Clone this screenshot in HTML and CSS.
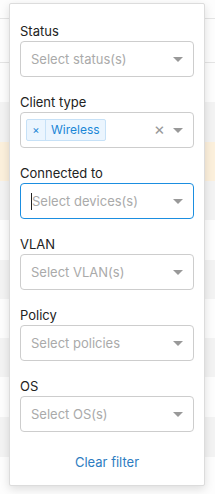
FILE: index.html
```html
<!DOCTYPE html>
<html>
<head>
<meta charset="utf-8">
<link rel="stylesheet" href="styles.css">
</head>
<body>
<div class="page">
  <div class="hd hd1"></div>
  <div class="hd hd2"></div>
  <div class="spacer"></div>
  <div class="row gray h40"></div>
  <div class="row cream h39"></div>
  <div class="row gray h39"></div>
  <div class="row h40"></div>
  <div class="row gray h39"></div>
  <div class="row h39"></div>
  <div class="row gray h39"></div>
  <div class="row h40"></div>
  <div class="row gray h40"></div>
  <div class="row h37"></div>
</div>

<div class="popover">
  <div class="group first">
    <div class="label">Status</div>
    <div class="select">
      <span class="placeholder">Select status(s)</span>
      <span class="arrow"></span>
    </div>
  </div>
  <div class="group">
    <div class="label">Client type</div>
    <div class="select multi">
      <span class="tag"><span class="tag-x">×</span><span class="tag-label">Wireless</span></span>
      <span class="grow"></span>
      <span class="clear">×</span>
      <span class="arrow"></span>
    </div>
  </div>
  <div class="group">
    <div class="label">Connected to</div>
    <div class="select focused">
      <span class="caret"></span>
      <span class="placeholder">Select devices(s)</span>
      <span class="arrow"></span>
    </div>
  </div>
  <div class="group">
    <div class="label">VLAN</div>
    <div class="select">
      <span class="placeholder">Select VLAN(s)</span>
      <span class="arrow"></span>
    </div>
  </div>
  <div class="group">
    <div class="label">Policy</div>
    <div class="select">
      <span class="placeholder">Select policies</span>
      <span class="arrow"></span>
    </div>
  </div>
  <div class="group">
    <div class="label">OS</div>
    <div class="select">
      <span class="placeholder">Select OS(s)</span>
      <span class="arrow"></span>
    </div>
  </div>
  <div class="footer"><span class="link">Clear filter</span></div>
</div>
</body>
</html>
```

FILE: styles.css
```css
html, body {
  margin: 0;
  padding: 0;
  background: #fdfdfd;
  font-family: Inter, "Noto Sans", sans-serif;
  overflow: hidden;
}
.page {
  width: 215px;
  height: 494px;
  display: flex;
  flex-direction: column;
}
.hd { border-bottom: 1px solid #e4e4e4; flex: none; }
.hd1 { height: 18px; }
.hd2 { height: 43px; }
.spacer { height: 39px; flex: none; }
.row { flex: none; background: #fdfdfd; }
.row.gray { background: #f3f3f3; }
.row.cream { background: #fcf0dc; }
.h37 { height: 37px; }
.h39 { height: 39px; }
.h40 { height: 40px; }

.popover {
  position: absolute;
  left: 9px;
  top: 3px;
  width: 174px;
  padding: 0 10px 13px;
  background: #fff;
  border: 1px solid #dcdcdc;
  border-radius: 2px;
  box-shadow: 0 3px 10px rgba(0,0,0,0.13);
  display: flex;
  flex-direction: column;
}
.group { margin-top: 15px; display: flex; flex-direction: column; }
.group.first { margin-top: 17px; }
.label {
  font-size: 13px;
  line-height: 20px;
  color: #222;
}
.select {
  box-sizing: border-box;
  height: 36px;
  border: 1px solid #cdcdcd;
  border-radius: 4px;
  display: flex;
  align-items: center;
  padding: 0 10px 0 10px;
  background: #fff;
}
.select.focused { border-color: #1b8ee0; }
.placeholder {
  flex: 1;
  font-size: 13px;
  color: #aaa;
  white-space: nowrap;
}
.caret {
  width: 1px;
  height: 17px;
  background: #222;
  flex: none;
}
.arrow {
  width: 0;
  height: 0;
  border-style: solid;
  border-width: 5px 5px 2.5px;
  border-color: #999 transparent transparent;
  margin-top: 2px;
  flex: none;
}
.select.multi { padding-left: 5px; }
.tag {
  display: flex;
  align-items: stretch;
  height: 22px;
  box-sizing: border-box;
  border: 1px solid #c6e1f7;
  background: #ebf5fe;
  border-radius: 2px;
  color: #1a86d6;
  font-size: 12px;
}
.tag-x {
  width: 18px;
  border-right: 1px solid #c6e1f7;
  display: flex;
  align-items: center;
  justify-content: center;
  font-size: 11px;
  line-height: 1;
}
.tag-label {
  padding: 0 5px 0 5px;
  display: flex;
  align-items: center;
  line-height: 1;
}
.grow { flex: 1; }
.clear {
  color: #999;
  font-size: 17px;
  line-height: 1;
  margin-right: 8px;
  margin-top: -1px;
}
.footer {
  margin-top: 20px;
  text-align: center;
  font-size: 13px;
  line-height: 20px;
}
.link { color: #2d7cc1; }
```
